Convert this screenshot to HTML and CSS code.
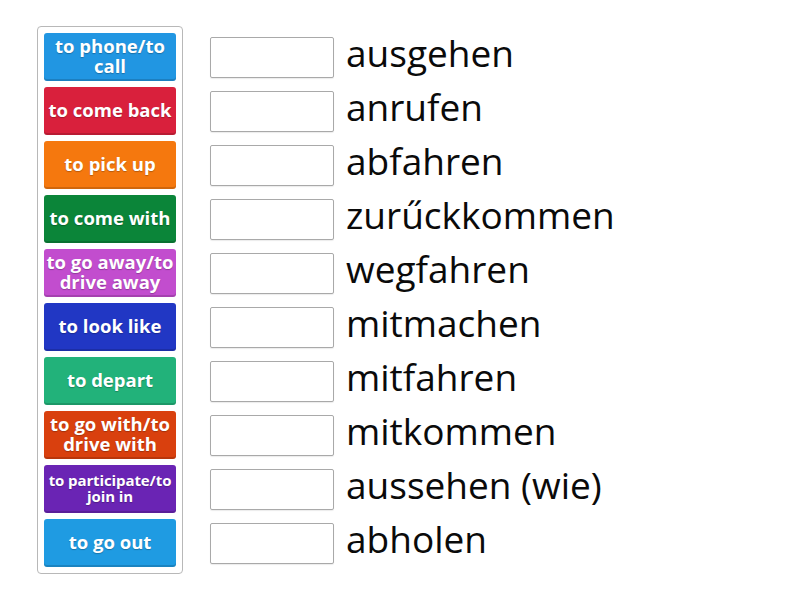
FILE: index.html
```html
<!DOCTYPE html>
<html>
<head>
<meta charset="utf-8">
<link rel="stylesheet" href="styles.css">
</head>
<body>
<div class="page">
  <div class="panel">
    <div class="tile c1">to phone/to call</div>
    <div class="tile c2">to come back</div>
    <div class="tile c3">to pick up</div>
    <div class="tile c4">to come with</div>
    <div class="tile c5">to go away/to drive away</div>
    <div class="tile c6">to look like</div>
    <div class="tile c7">to depart</div>
    <div class="tile c8">to go with/to drive with</div>
    <div class="tile c9 small">to participate/to join in</div>
    <div class="tile c10">to go out</div>
  </div>
  <div class="targets">
    <div class="row"><div class="slot"></div><div class="word">ausgehen</div></div>
    <div class="row"><div class="slot"></div><div class="word">anrufen</div></div>
    <div class="row"><div class="slot"></div><div class="word">abfahren</div></div>
    <div class="row"><div class="slot"></div><div class="word">zurűckkommen</div></div>
    <div class="row"><div class="slot"></div><div class="word">wegfahren</div></div>
    <div class="row"><div class="slot"></div><div class="word">mitmachen</div></div>
    <div class="row"><div class="slot"></div><div class="word">mitfahren</div></div>
    <div class="row"><div class="slot"></div><div class="word">mitkommen</div></div>
    <div class="row"><div class="slot"></div><div class="word">aussehen (wie)</div></div>
    <div class="row"><div class="slot"></div><div class="word">abholen</div></div>
  </div>
</div>
</body>
</html>
```

FILE: styles.css
```css
html, body {
  margin: 0;
  padding: 0;
  background: #ffffff;
}
body {
  width: 800px;
  height: 600px;
  overflow: hidden;
  font-family: "Open Sans", "DejaVu Sans", sans-serif;
}
.page {
  display: flex;
  align-items: flex-start;
  padding: 26px 0 0 37px;
}
.panel {
  width: 132px;
  padding: 6px;
  border: 1px solid #b8b8b8;
  border-radius: 4px;
  display: flex;
  flex-direction: column;
  gap: 6px;
  background: #fff;
}
.tile {
  height: 48px;
  border-radius: 3px;
  display: flex;
  align-items: center;
  justify-content: center;
  text-align: center;
  color: #fff;
  font-weight: 700;
  font-size: 18.5px;
  line-height: 1.08;
  text-shadow: 0 1px 1px rgba(0,0,0,0.25);
  box-shadow: inset 0 -2px 0 rgba(0,0,0,0.15);
  padding: 0 2px 2px;
  box-sizing: border-box;
}
.tile.small {
  font-size: 15px;
  line-height: 1.1;
  padding: 0 0 2px;
  letter-spacing: -0.1px;
}
.c1 { background: #2196e2; }
.c2 { background: #d9203c; }
.c3 { background: #f5780e; }
.c4 { background: #0b8539; }
.c5 { background: #c24dce; }
.c6 { background: #2137c4; }
.c7 { background: #22b27a; }
.c8 { background: #d9400e; }
.c9 { background: #6a24b4; }
.c10 { background: #1f9be2; }

.targets {
  margin-left: 27px;
  padding-top: 7px;
  display: flex;
  flex-direction: column;
  gap: 6px;
}
.row {
  height: 48px;
  display: flex;
  align-items: center;
}
.slot {
  width: 124px;
  height: 41px;
  box-sizing: border-box;
  border: 1px solid #a9a9a9;
  border-radius: 2px;
  box-shadow: 0 1px 1px rgba(0,0,0,0.08);
  background: #fff;
}
.word {
  margin-left: 12px;
  font-size: 37px;
  color: #0a0a0a;
  line-height: 48px;
  padding-bottom: 8px;
  white-space: nowrap;
}
```
